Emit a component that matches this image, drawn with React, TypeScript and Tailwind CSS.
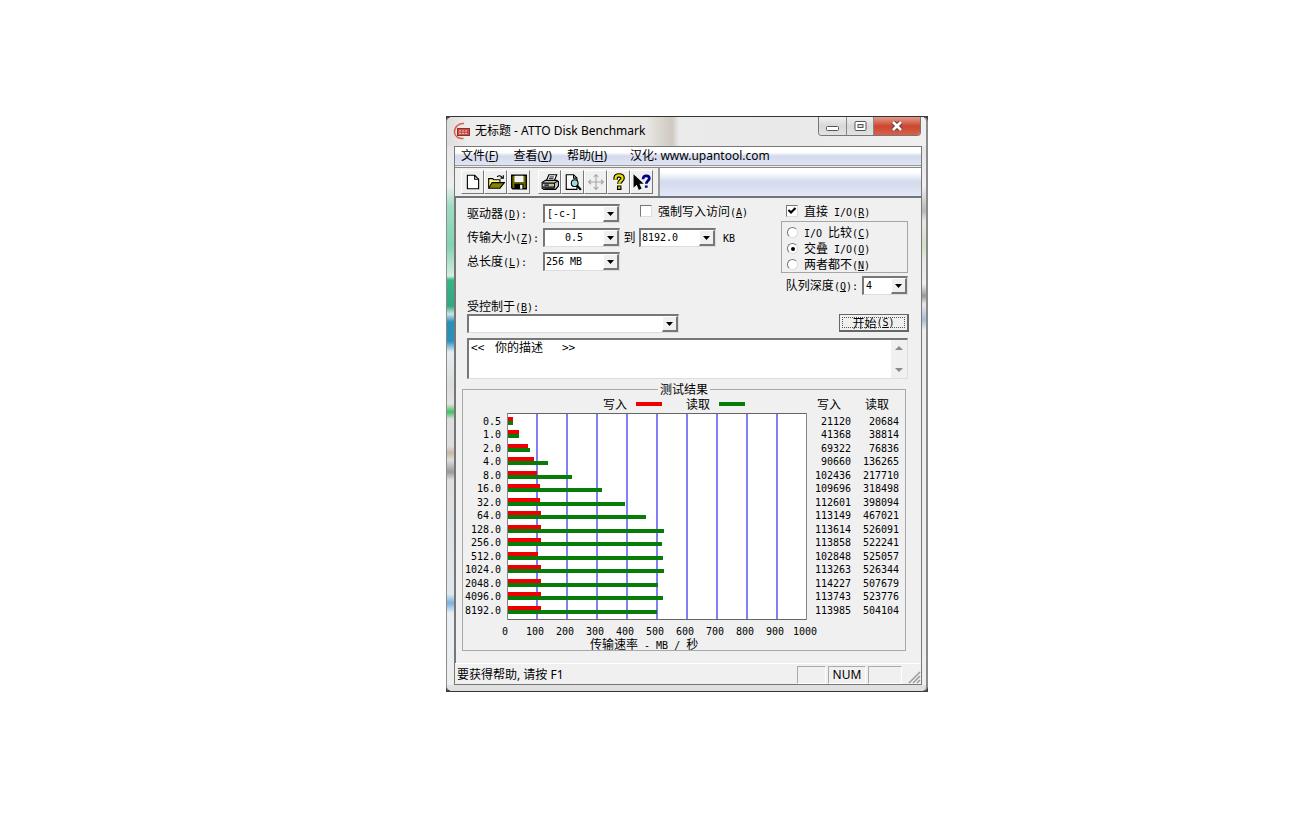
import { ReactNode, useState } from 'react';
import clsx from 'clsx';

const results = [
  { size: '0.5', write: 21120, read: 20684 },
  { size: '1.0', write: 41368, read: 38814 },
  { size: '2.0', write: 69322, read: 76836 },
  { size: '4.0', write: 90660, read: 136265 },
  { size: '8.0', write: 102436, read: 217710 },
  { size: '16.0', write: 109696, read: 318498 },
  { size: '32.0', write: 112601, read: 398094 },
  { size: '64.0', write: 113149, read: 467021 },
  { size: '128.0', write: 113614, read: 526091 },
  { size: '256.0', write: 113858, read: 522241 },
  { size: '512.0', write: 102848, read: 525057 },
  { size: '1024.0', write: 113263, read: 526344 },
  { size: '2048.0', write: 114227, read: 507679 },
  { size: '4096.0', write: 113743, read: 523776 },
  { size: '8192.0', write: 113985, read: 504104 },
];

const ticks = [0, 100, 200, 300, 400, 500, 600, 700, 800, 900, 1000];

const menus = [
  { label: '文件', hotkey: 'F' },
  { label: '查看', hotkey: 'V' },
  { label: '帮助', hotkey: 'H' },
];

// Narrow fixed-width text used beside the Chinese labels
function Mono({ children }: { children: ReactNode }) {
  return <span className="font-['DejaVu_Sans_Mono',monospace] text-[10px] whitespace-pre">{children}</span>;
}

function Hotkey({ letter, colon = false }: { letter: string; colon?: boolean }) {
  return (
    <Mono>
      (<u>{letter}</u>){colon && ':'}
    </Mono>
  );
}

function DropDown({ id, options, className, textClass = 'pl-[2px]' }: {
  id: string;
  options: string[];
  className: string;
  textClass?: string;
}) {
  return (
    <div className={clsx('relative h-[19px]', className)}>
      <select
        id={id}
        className={clsx(
          "block h-full w-full appearance-none border border-t-2 border-t-[#777] border-l-2 border-l-[#777] border-r-[#ddd] border-b-[#ddd] bg-white font-['DejaVu_Sans_Mono',monospace] text-[10px] leading-4 outline-none",
          textClass
        )}
      >
        {options.map((o) => (
          <option key={o}>{o}</option>
        ))}
      </select>
      <span className="pointer-events-none absolute top-[2px] right-px bottom-px flex w-4 items-center justify-center border border-r-2 border-b-2 border-t-white border-l-white border-r-[#777] border-b-[#777] bg-[#f0f0f0]">
        <svg width="7" height="4" viewBox="0 0 7 4">
          <path d="M0 0h7L3.5 4z" fill="#000" />
        </svg>
      </span>
    </div>
  );
}

function ToolButton({ label, children }: { label: string; children: ReactNode }) {
  return (
    <button
      type="button"
      aria-label={label}
      className="flex h-6 w-[23px] items-center justify-center border border-t-white border-l-white border-r-[#777] border-b-[#777] bg-[#f0f0f0]"
    >
      <svg width="18" height="18" viewBox="0 0 16 16">
        {children}
      </svg>
    </button>
  );
}

function Toolbar() {
  return (
    <div className="flex h-[31px] items-center border-t border-b-2 border-t-[#888] border-b-[#6f737a] bg-[#f0f0f0]">
      <div className="flex pl-[6px]">
        <ToolButton label="新建">
          <path d="M3 2h6.500L13 5.500V14H3z" fill="#fff" stroke="#000" />
          <path d="M9.500 2v3.500H13" fill="none" stroke="#000" />
        </ToolButton>
        <ToolButton label="打开">
          <path d="M1.500 13V5h3.500l1 1h5.500v3" fill="#ffff80" stroke="#000" />
          <path d="M1.500 13.500l3-5h11l-4 5z" fill="#848400" stroke="#000" />
          <path d="M9 3.500c1.500-1.500 3-1.500 4.500.5M14.500 2v2.500H12" fill="none" stroke="#000" />
        </ToolButton>
        <ToolButton label="保存">
          <path d="M1.500 2h13v12h-12l-1-1z" fill="#6c6c00" stroke="#000" strokeWidth="1.200" />
          <path d="M4 2.500h8V8H4z" fill="#f4f4f4" />
          <path d="M4 9.500h8V14H4z" fill="#000" />
          <path d="M9 10.500h2V14H9z" fill="#fff" />
        </ToolButton>
      </div>
      <div className="flex pl-2">
        <ToolButton label="打印">
          <path d="M5 6.500l2-5h7l-2 5" fill="#fff" stroke="#000" />
          <path d="M7.500 3.500h4M7 5h4" stroke="#000" strokeWidth=".8" />
          <path d="M1 8.500l3-2h10l1.500 1v4l-2.500 3H2.500L1 13.500z" fill="#c8c8c8" stroke="#000" />
          <path d="M1.500 9h10.500v3.500H1.500M12 9l3-2M3 14h9M3 10.800h4" fill="none" stroke="#000" />
          <path d="M8 10.800h2.500" stroke="#c8c800" />
        </ToolButton>
        <ToolButton label="打印预览">
          <path d="M2 1.500h6.500l3 3v10H2z" fill="#fff" stroke="#000" />
          <path d="M8.500 1.500v3h3" fill="none" stroke="#000" />
          <circle cx="9.500" cy="9" r="3" fill="#9fd8dc" stroke="#000" />
          <path d="M11.500 11l3.500 4" stroke="#000" strokeWidth="2" />
        </ToolButton>
        <ToolButton label="移动">
          <path d="M8 1v14M1 8h14M6 3.500l2-2 2 2M6 12.500l2 2 2-2M3.500 6l-2 2 2 2M12.500 6l2 2-2 2" fill="none" stroke="#a6a6a6" />
        </ToolButton>
        <ToolButton label="关于">
          <path d="M5 6V4.500C5 3 6 2.200 8 2.200s3.200 1 3.200 2.500c0 2-3 2.300-3 4.800" fill="none" stroke="#000" strokeWidth="4" />
          <path d="M5 6V4.500C5 3 6 2.200 8 2.200s3.200 1 3.200 2.500c0 2-3 2.300-3 4.800" fill="none" stroke="#e8e000" strokeWidth="2" />
          <path d="M6.200 11h4v4h-4z" fill="#000" />
          <path d="M7.200 12h2v2h-2z" fill="#e8e000" />
        </ToolButton>
        <ToolButton label="帮助">
          <path d="M.5 1v12l2.800-2.600L5.200 15l2.400-1.200L5.700 9.500h3.800z" fill="#000" />
          <path d="M9 5.500C9 3.500 10 2.500 11.800 2.500s2.700 1 2.700 2.300c0 2-2.700 2.200-2.700 4.700M11.800 11v2" fill="none" stroke="#000084" strokeWidth="2.400" />
        </ToolButton>
      </div>
      <div className="ml-[5px] h-full flex-1 border-l-2 border-[#999] bg-linear-to-b from-white from-15% via-[#d3daec] via-50% to-[#e2e8f6]" />
    </div>
  );
}

function TitleBar() {
  return (
    <header className="flex h-[29px] justify-between bg-[linear-gradient(90deg,#dcdcdc_0,#ececec_20px,#f2f2f2_110px,#e9e7e3_200px,#d5d1ca_218px,#cfc9c1_225px,#ebebeb_232px,#e9e9e9_340px,#efefef_100%)]">
      <div className="flex items-center gap-[4px] pb-px pl-[6px]">
        <svg width="18" height="18" viewBox="0 0 18 18">
          <path d="M11 1.500C6 1 1 5 1.500 10.500c.3 4 4 6.500 9 6" fill="none" stroke="#e05a50" strokeWidth="1.500" />
          <rect x="4.500" y="6.500" width="12" height="7" fill="#c65248" stroke="#8f3028" />
          <path d="M6 9h9M6 11.500h9" stroke="#f0b8b0" strokeDasharray="2 1" />
        </svg>
        <h1 className="text-[12px] leading-4">无标题 - ATTO Disk Benchmark</h1>
      </div>
      <div className="mr-[5px] flex h-[19px] overflow-hidden rounded-b-[4px] border border-t-0 border-[#777]">
        <button type="button" aria-label="最小化" className="flex w-[28px] items-center justify-center border-r border-[#888] bg-linear-to-b from-[#f0f0f0] via-[#d8d8d8] to-[#e2e2e2]">
          <svg width="13" height="12" viewBox="0 0 13 12">
            <rect x=".5" y="6.500" width="12" height="4" rx="1" fill="#fff" stroke="#555" />
          </svg>
        </button>
        <button type="button" aria-label="最大化" className="flex w-[27px] items-center justify-center border-r border-[#888] bg-linear-to-b from-[#f0f0f0] via-[#d8d8d8] to-[#e2e2e2]">
          <svg width="13" height="12" viewBox="0 0 13 12">
            <rect x="1" y="1.500" width="11" height="9" rx="1" fill="#fff" stroke="#555" />
            <rect x="4" y="4.500" width="5" height="3" fill="#ddd" stroke="#555" />
          </svg>
        </button>
        <button type="button" aria-label="关闭" className="flex w-[46px] items-center justify-center bg-linear-to-b from-[#e39a8c] via-[#cc4530] to-[#d9604a]">
          <svg width="14" height="10" viewBox="0 0 14 10">
            <path d="M3 1l8 8M11 1l-8 8" stroke="#634040" strokeWidth="4.600" />
            <path d="M3 1l8 8M11 1l-8 8" stroke="#fff" strokeWidth="2.600" />
          </svg>
        </button>
      </div>
    </header>
  );
}

function CheckBox({ checked, onChange, children }: {
  checked: boolean;
  onChange: (v: boolean) => void;
  children: ReactNode;
}) {
  return (
    <label className="flex h-[14px] items-center gap-[6px] whitespace-nowrap">
      <span className="relative h-3 w-3">
        <input
          type="checkbox"
          checked={checked}
          onChange={(e) => onChange(e.target.checked)}
          className="block h-3 w-3 appearance-none border border-t-[#777] border-l-[#777] border-r-[#ddd] border-b-[#ddd] bg-white"
        />
        {checked && (
          <svg className="pointer-events-none absolute inset-0" width="12" height="12" viewBox="0 0 12 12">
            <path d="M2.500 5l2.500 2.500L9.500 3" fill="none" stroke="#000" strokeWidth="2.200" />
          </svg>
        )}
      </span>
      <span>{children}</span>
    </label>
  );
}

function Settings() {
  const [forced, setForced] = useState(false);
  const [direct, setDirect] = useState(true);
  const [mode, setMode] = useState('overlapped');

  const modes = [
    { id: 'compare', text: <><Mono>I/O </Mono>比较<Hotkey letter="C" /></> },
    { id: 'overlapped', text: <>交叠<Mono> I/O</Mono><Hotkey letter="O" /></> },
    { id: 'neither', text: <>两者都不<Hotkey letter="N" /></> },
  ];

  return (
    <div className="flex justify-between pt-[6px] pr-[13px] pl-[11px]">
      <div className="flex flex-col gap-[5px]">
        <div className="flex h-[19px]">
          <label htmlFor="drive" className="w-[76px] leading-[18px]">驱动器<Hotkey letter="D" colon /></label>
          <DropDown id="drive" options={['[-c-]']} className="mr-5 w-[77px]" />
          <CheckBox checked={forced} onChange={setForced}>强制写入访问<Hotkey letter="A" /></CheckBox>
        </div>
        <div className="flex h-[19px]">
          <label htmlFor="size-from" className="w-[76px] leading-[18px] whitespace-nowrap">传输大小<Hotkey letter="Z" colon /></label>
          <DropDown id="size-from" options={['0.5']} className="w-[77px]" textClass="pl-5" />
          <label htmlFor="size-to" className="w-[19px] text-center leading-[18px]">到</label>
          <DropDown id="size-to" options={['8192.0']} className="w-[77px]" textClass="pl-px" />
          <span className="pl-[7px] leading-[18px]"><Mono>KB</Mono></span>
        </div>
        <div className="flex h-[19px]">
          <label htmlFor="total" className="w-[76px] leading-[18px]">总长度<Hotkey letter="L" colon /></label>
          <DropDown id="total" options={['256 MB']} className="w-[77px]" textClass="pl-px" />
        </div>
      </div>

      <div className="flex w-[127px] flex-col">
        <div className="h-[17px] pl-[5px]">
          <CheckBox checked={direct} onChange={setDirect}>直接<Mono> I/O</Mono><Hotkey letter="R" /></CheckBox>
        </div>
        <div role="radiogroup" className="flex flex-col border border-[#a5a5a5] pt-[2px] pl-[5px]">
          {modes.map((m) => (
            <label key={m.id} className="flex h-4 items-center gap-[6px] whitespace-nowrap">
              <span className="relative h-[11px] w-[11px]">
                <input
                  type="radio"
                  name="mode"
                  checked={mode === m.id}
                  onChange={() => setMode(m.id)}
                  className="block h-[11px] w-[11px] appearance-none rounded-full border border-t-[#777] border-l-[#777] border-r-[#ddd] border-b-[#ddd] bg-white"
                />
                {mode === m.id && (
                  <span className="pointer-events-none absolute top-[4px] left-[4px] h-[4px] w-[4px] rounded-full bg-black" />
                )}
              </span>
              <span>{m.text}</span>
            </label>
          ))}
        </div>
        <div className="flex justify-end gap-1 pt-[3px]">
          <label htmlFor="depth" className="leading-[18px] whitespace-nowrap">队列深度<Hotkey letter="Q" colon /></label>
          <DropDown id="depth" options={['4']} className="w-[46px]" />
        </div>
      </div>
    </div>
  );
}

function Control() {
  return (
    <div className="pt-[3px] pr-[12px] pl-[11px]">
      <label htmlFor="controlled" className="block h-[15px] leading-[14px]">受控制于<Hotkey letter="B" colon /></label>
      <div className="flex items-start justify-between">
        <DropDown id="controlled" options={['']} className="w-[212px]" />
        <button
          type="button"
          className="h-[18px] w-[70px] border border-r-2 border-b-2 border-[#666] bg-[#f0f0f0] p-[2px]"
        >
          <span className="flex h-full items-center justify-center border border-dotted border-[#555] text-[12px] leading-3">
            开始<Hotkey letter="S" />
          </span>
        </button>
      </div>
      <div className="mt-[5px] mr-px flex h-[41px] border border-t-2 border-t-[#777] border-l-2 border-l-[#777] border-r-[#ddd] border-b-[#ddd] bg-white">
        <textarea
          aria-label="描述"
          defaultValue={'<<\u00a0\u00a0\u00a0\u00a0你的描述\u00a0\u00a0\u00a0\u00a0\u00a0\u00a0\u00a0>>'}
          className="flex-1 resize-none overflow-hidden pl-[2px] leading-[14px] outline-none"
        />
        <div className="flex w-4 flex-col items-center justify-between bg-[#f0f0f0] py-[6px]">
          <svg width="8" height="4" viewBox="0 0 8 4"><path d="M0 4l4-4 4 4z" fill="#8a8a8a" /></svg>
          <svg width="8" height="4" viewBox="0 0 8 4"><path d="M0 0l4 4 4-4z" fill="#8a8a8a" /></svg>
        </div>
      </div>
    </div>
  );
}

// 1000 MB/s fills the full plot width, rows alternate 13px and 14px
function Plot() {
  return (
    <svg className="block w-full" height="207" viewBox="0 0 300 207" preserveAspectRatio="none" shapeRendering="crispEdges">
      <rect width="300" height="207" fill="#fff" />
      {ticks.slice(1, -1).map((t) => (
        <rect key={t} x={t * 0.3 - 1} y="0" width="2" height="206" fill="#8080f4" />
      ))}
      {results.map((r, i) => {
        const y = 4 + Math.floor(i * 13.5);
        return (
          <g key={r.size}>
            <rect x="1" y={y} width={Math.round(r.write * 0.0002975) - 1} height="4" fill="#ee0000" />
            <rect x="1" y={y + 4} width={Math.round(r.read * 0.0002975) - 1} height="4" fill="#087c08" />
          </g>
        );
      })}
      <path d="M0 0h300v1H0zM0 206h300v1H0z" fill="#666" />
      <path d="M0 0h1v207H0zM299 0h1v207h-1z" fill="#888" />
    </svg>
  );
}

function Results() {
  return (
    <fieldset className="mt-[3px] mr-[15px] ml-[6px] border border-[#a8a8a8]">
      <legend className="mx-auto h-[14px] px-[2px] leading-[14px]">测试结果</legend>
      <div className="flex">
        <ul className="w-[38px] pt-[19px] text-right font-['DejaVu_Sans_Mono',monospace] text-[10px] leading-[13px]">
          {results.map((r) => (
            <li key={r.size} className="odd:h-[13px] even:h-[14px]">{r.size}</li>
          ))}
        </ul>
        <div className="ml-[6px] min-w-0 flex-1">
          <div className="flex h-[17px] items-center pb-px pl-[96px] leading-[14px]">
            写入
            <span className="mr-6 ml-[9px] h-1 w-[26px] bg-[#ee0000]" />
            读取
            <span className="ml-[9px] h-1 w-[26px] bg-[#087c08]" />
          </div>
          <Plot />
        </div>
        <table className="mr-[6px] h-fit w-[92px] text-right font-['DejaVu_Sans_Mono',monospace] text-[10px] leading-[13px]">
          <thead className="font-['Noto_Sans_CJK_SC',sans-serif] text-[12px]">
            <tr className="h-[19px] align-top leading-4">
              <th className="w-[44px] p-0 text-center font-normal">写入</th>
              <th className="w-[48px] p-0 pl-1 text-center font-normal">读取</th>
            </tr>
          </thead>
          <tbody>
            {results.map((r) => (
              <tr key={r.size} className="align-top odd:h-[13px] even:h-[14px]">
                <td className="p-0">{r.write}</td>
                <td className="p-0">{r.read}</td>
              </tr>
            ))}
          </tbody>
        </table>
      </div>
      <div className="mt-[5px] flex h-[13px] pl-[27px] font-['DejaVu_Sans_Mono',monospace] text-[10px] leading-[13px]">
        {ticks.map((t) => (
          <span key={t} className="w-[30px] text-center">{t}</span>
        ))}
      </div>
      <p className="h-3 pl-[127px] leading-3">传输速率<Mono> - MB / </Mono>秒</p>
    </fieldset>
  );
}

function StatusBar() {
  return (
    <footer className="flex h-[21px] items-end border-t border-white bg-[#f0f0f0]">
      <p className="flex-1 pl-[2px] leading-[19px]">要获得帮助, 请按 F1</p>
      <div className="flex h-[18px] gap-[2px]">
        <span className="w-[29px] border border-t-[#aaa] border-l-[#aaa] border-r-white border-b-white" />
        <span className="w-[38px] border border-t-[#aaa] border-l-[#aaa] border-r-white border-b-white text-center leading-4">NUM</span>
        <span className="w-[34px] border border-t-[#aaa] border-l-[#aaa] border-r-white border-b-white" />
      </div>
      <svg className="ml-[5px]" width="14" height="14" viewBox="0 0 14 14">
        <path d="M2 13L13 2M6 13l7-7M10 13l3-3" stroke="#999" strokeWidth="1.500" />
      </svg>
    </footer>
  );
}

export default function App() {
  return (
    <main className="min-h-screen bg-white pt-[116px] pl-[446px] font-['Noto_Sans','Noto_Sans_CJK_SC',sans-serif] text-[12px] text-black">
      <div className="w-full max-w-[482px] bg-[#3c3c3c]">
        <div className="overflow-hidden rounded-[6px] border border-r-2 border-t-[#333] border-l-[#8c8c8c] border-r-[#8a8a8a] border-b-[#333] bg-[#e6e6e6]">
          <TitleBar />
          <div className="flex">
            <div className="w-[7px] bg-[linear-gradient(180deg,#e6e6e6_0,#eeeeee_40px,#9edcc4_60px,#84d2b2_100px,#d5eee0_130px,#35b588_134px,#35a880_160px,#d0e4e8_168px,#2a8fb8_176px,#2a90b8_195px,#e4eef2_206px,#dcdcdc_240px,#e4e4e4_258px,#40c060_266px,#dedede_273px,#dedede_300px,#c8b8a0_307px,#dedede_314px,#999999_326px,#dedede_334px,#e0e8ee_448px,#7ab0e0_457px,#e8eef2_467px,#eeeeee_100%)]" />
            <div className="min-w-0 flex-1 border border-[#777] bg-[#f0f0f0]">
              <nav className="flex h-[18px] items-center bg-linear-to-b from-white from-30% via-[#d3daec] via-50% to-[#dfe5f4] pl-[6px] leading-4">
                {menus.map((m) => (
                  <a key={m.hotkey} href={`#${m.hotkey}`} className="mr-[15px]">
                    {m.label}(<u>{m.hotkey}</u>)
                  </a>
                ))}
                <a href="#upantool" className="ml-[8px]">汉化: www.upantool.com</a>
              </nav>
              <div className="h-[2px] border-t border-[#999]" />
              <Toolbar />
              <div className="border-l border-[#777] pb-[12px] font-['Noto_Sans_CJK_SC',sans-serif]">
                <Settings />
                <Control />
                <Results />
              </div>
              <StatusBar />
            </div>
            <div className="w-[4px] bg-[linear-gradient(180deg,#e6e6e6_0,#f0f0f0_40px,#b8b8b8_65px,#e6e6e6_75px,#d4dfc4_100px,#e8e8e8_115px,#eeeeee_138px,#999999_150px,#e8e8e8_158px,#a8bcdc_174px,#eeeeee_184px,#eeeeee_100%)]" />
          </div>
          <div className="h-[6px] bg-[#e0e0e0]" />
        </div>
      </div>
    </main>
  );
}
